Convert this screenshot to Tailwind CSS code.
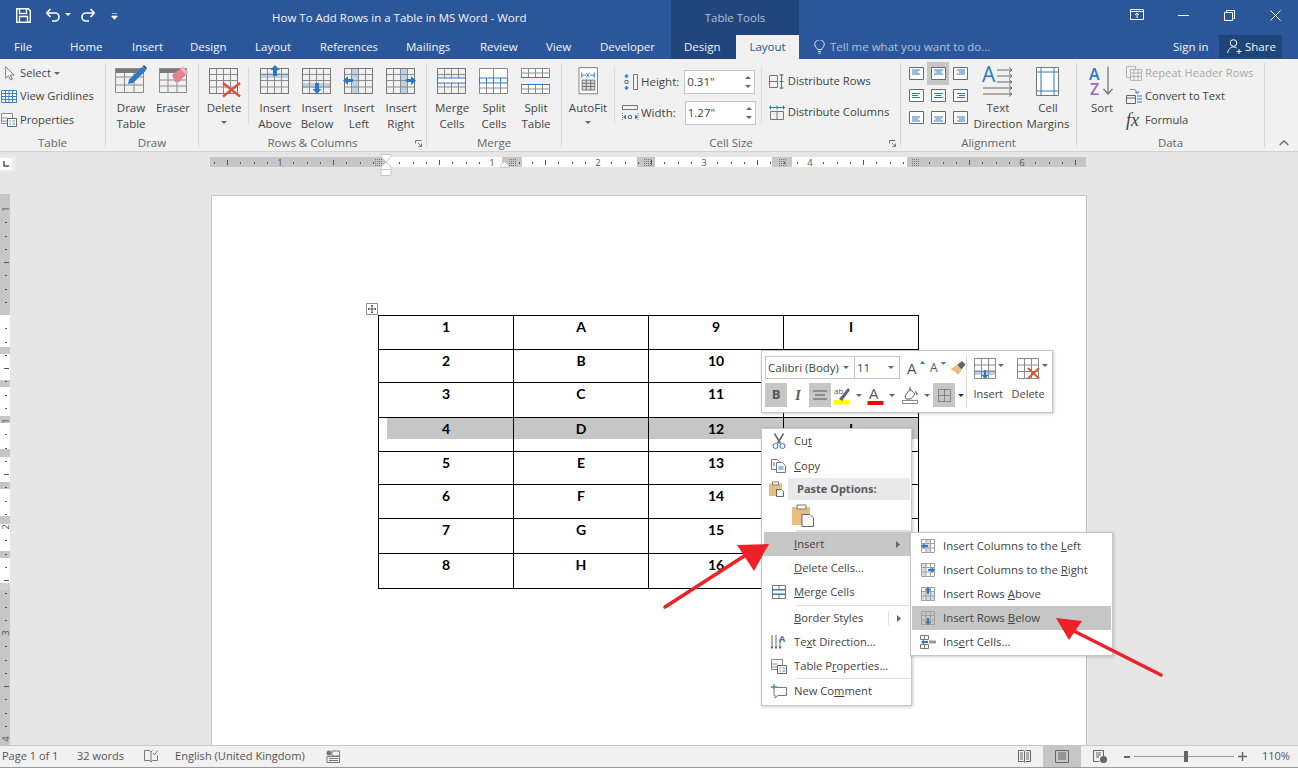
<!DOCTYPE html>
<html lang="en">
<head>
  <meta charset="UTF-8">
  <title>How To Add Rows in a Table in MS Word - Word</title>
  <script src="https://cdn.jsdelivr.net/npm/@tailwindcss/browser@4"></script>
</head>
<body class="m-0 overflow-hidden">
<svg width="0" height="0" class="absolute">
  <defs>
    <symbol id="grid" viewBox="0 0 29 26">
      <path d="M.5.5h28v25H.5zM.5 6.500h28M.5 12.500h28M.5 19h28M7.500.5v25M14.500.5v25M21.500.5v25" fill="none" stroke="#8a8a8a"/>
      <path d="M.5.5h28v25H.5z" fill="none" stroke="#777"/>
    </symbol>
    <symbol id="align" viewBox="0 0 15 13">
      <path d="M.5.5h14v12H.5z" fill="#fff" stroke="#6a6a6a"/>
    </symbol>
    <symbol id="mini" viewBox="0 0 14 14">
      <path d="M.5.5h13v13H.5zM.5 4.500h13M.5 9h13M5 .5v13M9.500.5v13" fill="none" stroke="#a0a0a0"/>
    </symbol>
    <symbol id="colmark" viewBox="0 0 7 7">
      <path d="M0 .5h7M0 2.500h7M0 4.500h7M0 6.500h7M.5 0v7M2.500 0v7M4.500 0v7M6.500 0v7" fill="none" stroke="#777" stroke-dasharray="1 1"/>
    </symbol>
  </defs>
</svg>

<div class="relative w-[1298px] h-[768px] overflow-hidden flex flex-col bg-[#e6e6e6] font-['Open_Sans',sans-serif] text-[11.5px] text-[#444]">

  <!-- title bar -->
  <div class="h-[35px] shrink-0 flex bg-[#2b579a] text-white">
    <div class="w-[272px] flex items-center pl-[16px]">
      <svg width="15" height="15" viewBox="0 0 15 15" class="mt-[-4px]"><path d="M.7.7h11.500l2.100 2.100v11.500H.7z" fill="none" stroke="#fff" stroke-width="1.400"/><path d="M3.500 1v4.500h7V1M3.500 14V8.500h8V14" fill="none" stroke="#fff" stroke-width="1.300"/></svg>
      <svg width="16" height="14" viewBox="0 0 16 14" class="ml-[14px] mt-[-6px]"><path d="M1.500 5h8.500a4 4 0 0 1 0 8H7M1.500 5l4-4M1.500 5l4 4" fill="none" stroke="#fff" stroke-width="1.600"/></svg>
      <svg width="6" height="4" viewBox="0 0 6 4" class="ml-[4px] mt-[-6px]"><path d="M0 0h6L3 3z" fill="#fff"/></svg>
      <svg width="16" height="14" viewBox="0 0 16 14" class="ml-[9px] mt-[-6px]"><path d="M14.500 5H6a4 4 0 0 0 0 8h3M14.500 5l-4-4M14.500 5l-4 4" fill="none" stroke="#fff" stroke-width="1.600"/></svg>
      <svg width="7" height="7" viewBox="0 0 7 7" class="ml-[15px] mt-[-2px]"><path d="M1 .5h5M.5 3h6L3.500 6.500z" fill="#fff" stroke="#fff" stroke-width=".6"/></svg>
    </div>
    <div class="w-[399px] pt-[9px] leading-[17px] text-[#f2f5fa]">How To Add Rows in a Table in MS Word - Word</div>
    <div class="w-[128px] bg-[#21457c] text-center pt-[9px] leading-[17px] text-[#b3c2d9]">Table Tools</div>
    <div class="flex-1 relative">
      <svg width="14" height="12" viewBox="0 0 14 12" class="absolute left-[331px] top-[9px]"><path d="M.5.5h13v10H.5zM.500 2.500h13M7 9V4.500M5 6l2-2 2 2" fill="none" stroke="#fff"/></svg>
      <svg width="11" height="2" viewBox="0 0 11 2" class="absolute left-[379px] top-[15px]"><path d="M0 .5h11" stroke="#fff"/></svg>
      <svg width="11" height="11" viewBox="0 0 11 11" class="absolute left-[425px] top-[10px]"><path d="M.5 2.500h8v8h-8zM2.500 2.500v-2h8v8h-2" fill="none" stroke="#fff"/></svg>
      <svg width="11" height="11" viewBox="0 0 11 11" class="absolute left-[471px] top-[10px]"><path d="M.5.5l10 10M10.500.5l-10 10" fill="none" stroke="#fff"/></svg>
    </div>
  </div>

  <!-- tabs -->
  <div class="h-[24px] shrink-0 flex bg-[#2b579a] text-[#f2f5fa] leading-[24px]">
    <div class="w-[70px] pl-[14px]">File</div>
    <div class="w-[62px]">Home</div>
    <div class="w-[58px]">Insert</div>
    <div class="w-[65px]">Design</div>
    <div class="w-[65px]">Layout</div>
    <div class="w-[86px] text-[11.2px]">References</div>
    <div class="w-[74px]">Mailings</div>
    <div class="w-[66px]">Review</div>
    <div class="w-[54px]">View</div>
    <div class="w-[71px]">Developer</div>
    <div class="w-[65px] bg-[#21457c] pl-[13px]">Design</div>
    <div class="w-[63px] bg-[#f1f1f1] text-[#2b579a] text-center">Layout</div>
    <div class="w-[374px] flex items-center pl-[15px] text-[#b3c2d9]">
      <svg width="11" height="14" viewBox="0 0 11 14" class="mr-[5px]"><path d="M3.500 9.500C3 7.500.7 7 .7 4.500a4.800 4.800 0 0 1 9.600 0C10.300 7 8 7.500 7.500 9.500zM4 11.500h3M4.500 13.300h2" fill="none" stroke="#dfe6f0"/></svg>
      Tell me what you want to do...
    </div>
    <div class="w-[46px]">Sign in</div>
    <div class="w-[63px] h-[23px] bg-[#1f4478] flex items-center pl-[8px] leading-[23px]">
      <svg width="15" height="15" viewBox="0 0 15 15" class="mr-[3px]"><circle cx="6.500" cy="4" r="3.300" fill="none" stroke="#fff"/><path d="M.7 14c.5-3.500 2.500-6 5.800-6 1.500 0 2.500.4 3.300 1.200M9.500 12.500h5M12 10v5" fill="none" stroke="#fff"/></svg>
      Share
    </div>
  </div>

  <!-- ribbon -->
  <div class="h-[93px] shrink-0 flex bg-[#f1f1f1] border-b border-[#d2d2d2] pt-[4px] relative">

    <!-- Table -->
    <div class="w-[106px] h-[84px] border-r border-[#d6d6d6] flex flex-col">
      <div class="h-[66px] shrink-0 text-[11.2px]">
        <div class="h-[21px] flex items-center pl-[5px]">
          <svg width="10" height="15" viewBox="0 0 10 15" class="mr-[5px]"><path d="M.7.7v11.500l2.800-2.500 2 4.300 1.800-.8-2-4.200h3.800z" fill="#fff" stroke="#7a7a7a"/></svg>
          Select
          <svg width="6" height="3" viewBox="0 0 6 3" class="ml-[3px]"><path d="M0 0h6L3 3z" fill="#666"/></svg>
        </div>
        <div class="h-[25px] flex items-center pl-[1px]">
          <svg width="16" height="13" viewBox="0 0 16 13" class="mr-[3px]"><path d="M.5.5h15v12H.5zM.5 3.500h15M.5 6.500h15M.5 9.500h15M4.500.5v12M8 .5v12M11.500.5v12" fill="#fff" stroke="#3a7fc0"/></svg>
          View Gridlines
        </div>
        <div class="h-[22px] flex items-center pl-[1px]">
          <svg width="16" height="14" viewBox="0 0 16 14" class="mr-[3px]"><path d="M.5.5h11v2H.5z" fill="#777"/><path d="M.5.5h11v10H.5zM.5 5h6M.5 8h6" fill="#fff" stroke="#8a8a8a"/><path d="M6.500 5.500h9v8h-9z" fill="#fff" stroke="#666"/><path d="M8.500 8h1.500M8.500 11h1.500M11.500 8h2.500M11.500 11h2.500" stroke="#3a7fc0"/></svg>
          Properties
        </div>
      </div>
      <div class="text-center leading-[14px] pt-[7px] text-[#666]">Table</div>
    </div>

    <!-- Draw -->
    <div class="w-[93px] h-[84px] border-r border-[#d6d6d6] flex flex-col">
      <div class="h-[66px] shrink-0 flex items-start pl-[4px]">
        <div class="w-[42px] flex flex-col items-center text-center leading-[16px]">
          <svg width="32" height="31" viewBox="0 0 32 31" class="mb-[6px]"><path d="M.5 5h28v5H.5z" fill="#7a7a7a"/><path d="M.5 5.500h28v24H.5zM.5 14h28M.5 22h28M9.500 10v19.500M19 10v19.500" fill="none" stroke="#8a8a8a"/><path d="M13 21l1-4.500L27 4l4 3.500L18 20z" fill="#2b79c2"/><path d="M27.500 3.500l1.500-1.500 3 3-1.500 2z" fill="#1f5f9e"/></svg>
          Draw<br>Table
        </div>
        <div class="w-[42px] flex flex-col items-center text-center leading-[16px]">
          <svg width="32" height="31" viewBox="0 0 32 31" class="mb-[6px]"><path d="M2.500 5h27v5h-27z" fill="#7a7a7a"/><path d="M2.500 5.500h27v24h-27zM2.500 17h27M2.500 23h27M11 10v19.500M20 17v12.500" fill="none" stroke="#8a8a8a"/><path d="M15 12L26 3.500l5 6L22 19h-4z" fill="#e8808f"/><path d="M26 3.500l5 6-2.500 2-5-6z" fill="#f3b3bc"/></svg>
          Eraser
        </div>
      </div>
      <div class="text-center leading-[14px] pt-[7px] text-[#666]">Draw</div>
    </div>

    <!-- Rows & Columns -->
    <div class="w-[228px] h-[84px] border-r border-[#d6d6d6] flex flex-col relative">
      <div class="h-[66px] shrink-0 flex items-start pl-[4px]">
        <div class="w-[42px] flex flex-col items-center text-center leading-[16px]">
          <svg width="32" height="31" viewBox="0 0 32 31" class="mb-[6px] overflow-visible"><use href="#grid" x="1" y="5" width="29" height="26"/><path d="M15 20l17 13.500M32 20L15 33.500" stroke="#d9563a" stroke-width="2.500"/></svg>
          Delete
          <svg width="6" height="3" viewBox="0 0 6 3" class="mt-[5px]"><path d="M0 0h6L3 3z" fill="#666"/></svg>
        </div>
        <div class="w-[9px] flex justify-start"><div class="w-px h-[55px] bg-[#d9d9d9] mt-[5px] ml-[3px]"></div></div>
        <div class="w-[42px] flex flex-col items-center text-center leading-[16px]">
          <svg width="32" height="31" viewBox="0 0 32 31" class="mb-[6px]"><path d="M1 10h29v5H1z" fill="#bdd0e6"/><use href="#grid" x="1" y="5" width="29" height="26"/><path d="M16 2l4.500 5H18v6h-4V7h-2.500z" fill="#2b79c2"/></svg>
          Insert<br>Above
        </div>
        <div class="w-[42px] flex flex-col items-center text-center leading-[16px]">
          <svg width="32" height="31" viewBox="0 0 32 31" class="mb-[6px]"><path d="M1 20h29v5H1z" fill="#bdd0e6"/><use href="#grid" x="1" y="5" width="29" height="26"/><path d="M16 31l-4.500-5H14v-6h4v6h2.500z" fill="#2b79c2"/></svg>
          Insert<br>Below
        </div>
        <div class="w-[42px] flex flex-col items-center text-center leading-[16px]">
          <svg width="32" height="31" viewBox="0 0 32 31" class="mb-[6px]"><path d="M9 5h6v26H9z" fill="#bdd0e6"/><use href="#grid" x="1" y="5" width="29" height="26"/><path d="M0 17.500L5 13v3h5v3H5v3z" fill="#2b79c2"/></svg>
          Insert<br>Left
        </div>
        <div class="w-[42px] flex flex-col items-center text-center leading-[16px]">
          <svg width="32" height="31" viewBox="0 0 32 31" class="mb-[6px]"><path d="M16 5h6v26h-6z" fill="#bdd0e6"/><use href="#grid" x="1" y="5" width="29" height="26"/><path d="M31 17.500L26 13v3h-5v3h5v3z" fill="#2b79c2"/></svg>
          Insert<br>Right
        </div>
      </div>
      <div class="text-center leading-[14px] pt-[7px] text-[#666]">Rows &amp; Columns</div>
      <svg width="7" height="7" viewBox="0 0 7 7" class="absolute right-[4px] bottom-[0px]"><path d="M.5 3.500v-3h6M6.500 3.500v3h-3M3 3l3 3" fill="none" stroke="#777"/></svg>
    </div>

    <!-- Merge -->
    <div class="w-[135px] h-[84px] border-r border-[#d6d6d6] flex flex-col">
      <div class="h-[66px] shrink-0 flex items-start pl-[4px]">
        <div class="w-[42px] flex flex-col items-center text-center leading-[16px]">
          <svg width="32" height="31" viewBox="0 0 32 31" class="mb-[6px]"><use href="#grid" x="1" y="5" width="29" height="26"/><path d="M1.500 15h28v5h-28z" fill="#fff" stroke="#2b79c2"/></svg>
          Merge<br>Cells
        </div>
        <div class="w-[42px] flex flex-col items-center text-center leading-[16px]">
          <svg width="32" height="31" viewBox="0 0 32 31" class="mb-[6px]"><path d="M1.500 5.500h28v25h-28zM1.500 25h28M15.500 5.500V15M8.500 20v10.500M15.500 20v10.500M22.500 20v10.500" fill="#fff" stroke="#8a8a8a"/><path d="M1.500 15h28v5h-28zM8.500 15v5M15.500 15v5M22.500 15v5" fill="#fff" stroke="#2b79c2"/></svg>
          Split<br>Cells
        </div>
        <div class="w-[42px] flex flex-col items-center text-center leading-[16px]">
          <svg width="32" height="31" viewBox="0 0 32 31" class="mb-[6px]"><path d="M1.500 5.500h28v9h-28zM1.500 21.500h28v9h-28zM1.500 10h28M1.500 26h28M8.500 5.500v9M15.500 5.500v9M22.500 5.500v9M8.500 21.500v9M15.500 21.500v9M22.500 21.500v9" fill="#fff" stroke="#8a8a8a"/><path d="M1 14.500h29M1 21.500h29" stroke="#2b79c2"/></svg>
          Split<br>Table
        </div>
      </div>
      <div class="text-center leading-[14px] pt-[7px] text-[#666]">Merge</div>
    </div>

    <!-- Cell Size -->
    <div class="w-[339px] h-[84px] border-r border-[#d6d6d6] flex flex-col relative">
      <div class="h-[66px] shrink-0 flex items-start pl-[4px]">
        <div class="w-[44px] flex flex-col items-center text-center leading-[16px]">
          <svg width="22" height="28" viewBox="0 0 24 31" class="mt-[4px] mb-[5px]"><path d="M2 .7h20.500v29H2z" fill="#fff" stroke="#777"/><path d="M5 6v6M19 6v6M5 9h5M14 9h5M10 6.500l3.500 5M13.500 6.500l-3.500 5" fill="none" stroke="#2b79c2"/><path d="M5.500 14.500h14v11h-14zM5.500 18h14M5.500 21.500h14M10 14.500v11M15 14.500v11" fill="#ddd" stroke="#666"/></svg>
          AutoFit
          <svg width="6" height="3" viewBox="0 0 6 3" class="mt-[5px]"><path d="M0 0h6L3 3z" fill="#666"/></svg>
        </div>
        <div class="w-px h-[55px] bg-[#d9d9d9] mt-[5px] ml-[4px]"></div>
        <div class="flex flex-col pl-[7px] pt-[7px]">
          <div class="h-[23px] flex items-center">
            <svg width="17" height="16" viewBox="0 0 17 16" class="mr-[2px]"><path d="M11.500.5h4v15h-4z" fill="none" stroke="#777"/><path d="M4.500 0L7 2.500H5.300V4H3.700V2.500H2zM4.500 16L2 13.500h1.700V12h1.600v1.500H7z" fill="#2b79c2"/><path d="M3 6.500h3v3H3z" fill="none" stroke="#777"/></svg>
            Height:
            <div class="ml-[5px] w-[71px] h-[24px] bg-white border border-[#c6c6c6] flex items-center pl-[2px] justify-between pr-[3px]">
              0.31"
              <div class="flex flex-col gap-[6px]"><svg width="6" height="3" viewBox="0 0 6 3"><path d="M0 3h6L3 0z" fill="#666"/></svg><svg width="6" height="3" viewBox="0 0 6 3"><path d="M0 0h6L3 3z" fill="#666"/></svg></div>
            </div>
          </div>
          <div class="h-[23px] mt-[8px] flex items-center">
            <svg width="17" height="16" viewBox="0 0 17 16" class="mr-[2px]"><path d="M.5.5h15v4H.5z" fill="none" stroke="#777"/><path d="M.5 8v7M16 8v7" stroke="#777" stroke-dasharray="1 1"/><path d="M1 12l3-2.500v5zM16 12l-3-2.500v5z" fill="#2b79c2"/><path d="M6.500 10.500h3v3h-3z" fill="none" stroke="#777"/></svg>
            Width:
            <div class="ml-[9px] w-[71px] h-[24px] bg-white border border-[#c6c6c6] flex items-center pl-[2px] justify-between pr-[3px]">
              1.27"
              <div class="flex flex-col gap-[6px]"><svg width="6" height="3" viewBox="0 0 6 3"><path d="M0 3h6L3 0z" fill="#666"/></svg><svg width="6" height="3" viewBox="0 0 6 3"><path d="M0 0h6L3 3z" fill="#666"/></svg></div>
            </div>
          </div>
        </div>
        <div class="w-px h-[55px] bg-[#d9d9d9] mt-[5px] ml-[5px]"></div>
        <div class="flex flex-col pl-[7px] pt-[7px] text-[11.3px]">
          <div class="h-[23px] flex items-center">
            <svg width="16" height="15" viewBox="0 0 16 15" class="mr-[3px]"><path d="M.5 1.500h8v12h-8zM.5 7.500h8" fill="none" stroke="#777"/><path d="M12.500 0v15M10.500 1h4M10.500 7.500h4M10.500 14h4" fill="none" stroke="#2b79c2"/></svg>
            Distribute Rows
          </div>
          <div class="h-[23px] mt-[8px] flex items-center">
            <svg width="16" height="15" viewBox="0 0 16 15" class="mr-[3px]"><path d="M1.500 6.500h13v8h-13zM8 6.500v8" fill="none" stroke="#777"/><path d="M0 2.500h16M1.500.5v4M8 .5v4M14.500.5v4" fill="none" stroke="#2b79c2"/></svg>
            Distribute Columns
          </div>
        </div>
      </div>
      <div class="text-center leading-[14px] pt-[7px] text-[#666]">Cell Size</div>
      <svg width="7" height="7" viewBox="0 0 7 7" class="absolute right-[4px] bottom-[0px]"><path d="M.5 3.500v-3h6M6.500 3.500v3h-3M3 3l3 3" fill="none" stroke="#777"/></svg>
    </div>

    <!-- Alignment -->
    <div class="w-[176px] h-[84px] border-r border-[#d6d6d6] flex flex-col">
      <div class="h-[66px] shrink-0 flex items-start pl-[4px]">
        <div class="w-[66px] grid grid-cols-3 grid-rows-3 h-[66px] mt-[-1px]">
          <div class="flex items-center justify-center w-[22px] h-[23px]"><svg width="15" height="13" viewBox="0 0 15 13"><use href="#align"/><path d="M3 3h8M3 5h6M3 7h8" stroke="#2b79c2"/></svg></div>
          <div class="flex items-center justify-center w-[22px] h-[23px] bg-[#c6c6c6]"><svg width="15" height="13" viewBox="0 0 15 13"><use href="#align"/><path d="M3 3h9M4.500 5h6M3 7h9" stroke="#2b79c2"/></svg></div>
          <div class="flex items-center justify-center w-[22px] h-[23px]"><svg width="15" height="13" viewBox="0 0 15 13"><use href="#align"/><path d="M4 3h8M6 5h6M4 7h8" stroke="#2b79c2"/></svg></div>
          <div class="flex items-center justify-center w-[22px] h-[23px]"><svg width="15" height="13" viewBox="0 0 15 13"><use href="#align"/><path d="M3 4.500h8M3 6.500h6M3 8.500h8" stroke="#2b79c2"/></svg></div>
          <div class="flex items-center justify-center w-[22px] h-[23px]"><svg width="15" height="13" viewBox="0 0 15 13"><use href="#align"/><path d="M3 4.500h9M4.500 6.500h6M3 8.500h9" stroke="#2b79c2"/></svg></div>
          <div class="flex items-center justify-center w-[22px] h-[23px]"><svg width="15" height="13" viewBox="0 0 15 13"><use href="#align"/><path d="M4 4.500h8M6 6.500h6M4 8.500h8" stroke="#2b79c2"/></svg></div>
          <div class="flex items-center justify-center w-[22px] h-[23px]"><svg width="15" height="13" viewBox="0 0 15 13"><use href="#align"/><path d="M3 6h8M3 8h6M3 10h8" stroke="#2b79c2"/></svg></div>
          <div class="flex items-center justify-center w-[22px] h-[23px]"><svg width="15" height="13" viewBox="0 0 15 13"><use href="#align"/><path d="M3 6h9M4.500 8h6M3 10h9" stroke="#2b79c2"/></svg></div>
          <div class="flex items-center justify-center w-[22px] h-[23px]"><svg width="15" height="13" viewBox="0 0 15 13"><use href="#align"/><path d="M4 6h8M6 8h6M4 10h8" stroke="#2b79c2"/></svg></div>
        </div>
        <div class="w-[50px] flex flex-col items-center text-center leading-[16px] ml-[2px]">
          <svg width="32" height="31" viewBox="0 0 32 31" class="mt-[3px] mb-[3px] overflow-visible"><text x="0" y="16" font-family="Open Sans" font-size="21" fill="#2b79c2">A</text><path d="M15 4h15M15 10h15M15 16h15M1 22h29M1 28h29M27 1.500l3 2.500-3 2.500M27 7.500l3 2.500-3 2.500M27 13.500l3 2.500-3 2.500M27 19.500l3 2.500-3 2.500M27 25.500l3 2.500-3 2.500" fill="none" stroke="#666"/></svg>
          Text<br>Direction
        </div>
        <div class="w-[50px] flex flex-col items-center text-center leading-[16px]">
          <svg width="24" height="31" viewBox="0 0 24 31" class="mt-[3px] mb-[3px]"><path d="M.5 1.500h22v28H.5z" fill="#fff" stroke="#777"/><path d="M5 1.500v28M18 1.500v28M.5 6h22M.5 25h22" fill="none" stroke="#2b79c2"/></svg>
          Cell<br>Margins
        </div>
      </div>
      <div class="text-center leading-[14px] pt-[7px] text-[#666]">Alignment</div>
    </div>

    <!-- Data -->
    <div class="w-[188px] h-[84px] border-r border-[#d6d6d6] flex flex-col">
      <div class="h-[66px] shrink-0 flex items-start pl-[5px]">
        <div class="w-[40px] flex flex-col items-center text-center leading-[16px]">
          <svg width="26" height="31" viewBox="0 0 26 31" class="mt-[3px] mb-[3px] overflow-visible"><text x="0" y="14" font-family="Open Sans" font-size="16" font-weight="600" fill="#2b79c2">A</text><text x="1" y="29" font-family="Open Sans" font-size="16" font-weight="600" fill="#9a6bbd">Z</text><path d="M19 .5V28M14.500 23l4.500 5 4.500-5" fill="none" stroke="#777" stroke-width="1.300"/></svg>
          Sort
        </div>
        <div class="flex flex-col pl-[4px] text-[11.2px]">
          <div class="h-[21px] flex items-center text-[#a9a9a9]">
            <svg width="16" height="15" viewBox="0 0 16 15" class="mr-[3px]"><path d="M.5.5h9v11h-9z" fill="none" stroke="#b5b5b5"/><path d="M4.500 3.500h11v11h-11zM4.500 7h11M4.500 10.500h11M8 3.500v11M12 3.500v11" fill="#f1f1f1" stroke="#b5b5b5"/></svg>
            Repeat Header Rows
          </div>
          <div class="h-[25px] flex items-center">
            <svg width="16" height="15" viewBox="0 0 16 15" class="mr-[3px]"><path d="M.5 6.500h9v8h-9zM.5 9h9" fill="none" stroke="#666"/><path d="M4 .5c4-1 6 .5 7 3M9 3l2.500 1.500L13 2" fill="none" stroke="#2b79c2"/><path d="M11 7h5M11 10h5M11 13h5" stroke="#2b79c2"/></svg>
            Convert to Text
          </div>
          <div class="h-[22px] flex items-center">
            <span class="w-[19px] text-[18px] font-['Liberation_Serif',serif] italic leading-none text-[#444]">fx</span>
            Formula
          </div>
        </div>
      </div>
      <div class="text-center leading-[14px] pt-[7px] text-[#666]">Data</div>
    </div>
    <svg width="10" height="6" viewBox="0 0 10 6" class="absolute left-[1279px] top-[81px]"><path d="M.7 5L5 1l4.300 4" fill="none" stroke="#666" stroke-width="1.300"/></svg>
  </div>

  <!-- document area -->
  <div class="flex-1 relative min-h-0 flex flex-col items-start">
    <div class="absolute left-0 top-[3px] w-[16px] h-[17px] bg-[#ebebeb] pl-0">
      <div class="w-[12px] h-[12px] bg-white mt-[3px] flex items-center justify-center"><svg width="6" height="6" viewBox="0 0 6 6"><path d="M1 0v5h5" fill="none" stroke="#555" stroke-width="1.500"/></svg></div>
    </div>

    <!-- horizontal ruler -->
    <div class="ml-[210px] mt-[5px] w-[876px] h-[10px] flex shrink-0 relative">
      <div class="w-[176px] bg-[#c6c6c6]"></div>
      <div class="w-[116px] bg-white"></div>
      <div class="w-[20px] bg-[#c6c6c6]"></div>
      <div class="w-[115px] bg-white"></div>
      <div class="w-[18px] bg-[#c6c6c6]"></div>
      <div class="w-[117px] bg-white"></div>
      <div class="w-[20px] bg-[#c6c6c6]"></div>
      <div class="w-[115px] bg-white"></div>
      <div class="flex-1 bg-[#c6c6c6]"></div>
      <svg id="hruler" width="876" height="10" viewBox="0 0 876 10" class="absolute left-0 top-0 overflow-visible"></svg>
      <svg width="7" height="7" class="absolute left-[165px] top-[2px]"><use href="#colmark"/></svg>
      <svg width="7" height="7" class="absolute left-[299px] top-[2px]"><use href="#colmark"/></svg>
      <svg width="7" height="7" class="absolute left-[434px] top-[2px]"><use href="#colmark"/></svg>
      <svg width="7" height="7" class="absolute left-[569px] top-[2px]"><use href="#colmark"/></svg>
      <svg width="7" height="7" class="absolute left-[702px] top-[2px]"><use href="#colmark"/></svg>
      <svg width="14" height="24" viewBox="0 0 14 24" class="absolute left-[170px] top-[-3px]"><path d="M1 .5h10v2L6 8 1 2.500zM6 8l5 4.500v3H1v-3zM1 15.500h10v6H1z" fill="#fff" stroke="#c6c6c6"/></svg>
      <svg width="10" height="7" viewBox="0 0 10 7" class="absolute left-[290px] top-[4px]"><path d="M.5 6.500v-2L4.500.5l4 4v2z" fill="#fff" stroke="#c6c6c6"/></svg>
    </div>

    <!-- vertical ruler -->
    <div class="absolute left-0 top-[42px] w-[10px] h-[551px] bg-white">
      <div class="absolute left-0 top-0 w-full h-[121px] bg-[#c6c6c6]"></div>
      <div class="absolute left-0 top-[153px] w-full h-[7px] bg-[#c6c6c6]"></div>
      <div class="absolute left-0 top-[186px] w-full h-[7px] bg-[#c6c6c6]"></div>
      <div class="absolute left-0 top-[222px] w-full h-[7px] bg-[#c6c6c6]"></div>
      <div class="absolute left-0 top-[255px] w-full h-[8px] bg-[#c6c6c6]"></div>
      <div class="absolute left-0 top-[288px] w-full h-[7px] bg-[#c6c6c6]"></div>
      <div class="absolute left-0 top-[322px] w-full h-[8px] bg-[#c6c6c6]"></div>
      <div class="absolute left-0 top-[357px] w-full h-[7px] bg-[#c6c6c6]"></div>
      <div class="absolute left-0 top-[389px] w-full h-[7px] bg-[#d0d0d0]"></div>
      <div class="absolute left-0 top-[396px] w-full h-[155px] bg-[#c6c6c6]"></div>
      <svg id="vruler" width="10" height="551" viewBox="0 0 10 551" class="absolute left-0 top-0 overflow-visible"></svg>
    </div>

    <!-- page -->
    <div class="ml-[211px] mt-[28px] w-[876px] flex-1 bg-white border-x border-t border-[#c6c6c6] pt-[119px] pl-[166px] font-['Lato',sans-serif] text-[14px] font-bold text-black relative">
      <table class="table-fixed border-collapse w-[541px] text-center">
        <colgroup><col class="w-[135px]"><col class="w-[135px]"><col class="w-[135px]"><col class="w-[135px]"></colgroup>
        <tbody>
          <tr class="h-[34px]"><td class="border border-black align-top leading-[22px]">1</td><td class="border border-black align-top leading-[22px]">A</td><td class="border border-black align-top leading-[22px]">9</td><td class="border border-black align-top leading-[22px]">I</td></tr>
          <tr class="h-[33px]"><td class="border border-black align-top leading-[22px]">2</td><td class="border border-black align-top leading-[22px]">B</td><td class="border border-black align-top leading-[22px]">10</td><td class="border border-black align-top leading-[22px]"></td></tr>
          <tr class="h-[35px]"><td class="border border-black align-top leading-[22px]">3</td><td class="border border-black align-top leading-[22px]">C</td><td class="border border-black align-top leading-[22px]">11</td><td class="border border-black align-top leading-[22px]"></td></tr>
          <tr class="h-[34px]"><td class="border border-black align-top leading-[22px]"><div class="ml-[8px] pr-[8px] bg-[#c6c6c6] h-[21px]">4</div></td><td class="border border-black align-top leading-[22px]"><div class="bg-[#c6c6c6] h-[21px]">D</div></td><td class="border border-black align-top leading-[22px]"><div class="bg-[#c6c6c6] h-[21px]">12</div></td><td class="border border-black align-top leading-[22px]"><div class="bg-[#c6c6c6] h-[21px]">I</div></td></tr>
          <tr class="h-[33px]"><td class="border border-black align-top leading-[22px]">5</td><td class="border border-black align-top leading-[22px]">E</td><td class="border border-black align-top leading-[22px]">13</td><td class="border border-black align-top leading-[22px]"></td></tr>
          <tr class="h-[34px]"><td class="border border-black align-top leading-[22px]">6</td><td class="border border-black align-top leading-[22px]">F</td><td class="border border-black align-top leading-[22px]">14</td><td class="border border-black align-top leading-[22px]"></td></tr>
          <tr class="h-[35px]"><td class="border border-black align-top leading-[22px]">7</td><td class="border border-black align-top leading-[22px]">G</td><td class="border border-black align-top leading-[22px]">15</td><td class="border border-black align-top leading-[22px]"></td></tr>
          <tr class="h-[35px]"><td class="border border-black align-top leading-[22px]">8</td><td class="border border-black align-top leading-[22px]">H</td><td class="border border-black align-top leading-[22px]">16</td><td class="border border-black align-top leading-[22px]"></td></tr>
        </tbody>
      </table>
      <!-- table move handle -->
      <svg width="12" height="12" viewBox="0 0 12 12" class="absolute left-[154px] top-[107px]"><path d="M.5.5h11v11H.5z" fill="#fff" stroke="#909090"/><path d="M6 2v8M2 6h8M5 3l1-1 1 1M5 9l1 1 1-1M3 5L2 6l1 1M9 5l1 1-1 1" fill="none" stroke="#555"/></svg>
    </div>
  </div>

  <!-- status bar -->
  <div class="h-[23px] shrink-0 flex items-center bg-[#f1f1f1] border-t border-[#c6c6c6] border-b border-b-[#9a9a9a] text-[#555] text-[11px] relative">
    <span class="ml-[2px] w-[75px]">Page 1 of 1</span>
    <span class="w-[67px]">32 words</span>
    <svg width="14" height="13" viewBox="0 0 14 13"><path d="M.5.5h5l1.500 1.500L8.500.5M.5.5v10h5l1.500 1.500V2M7 12l1.500-1.500H13.500v-5M9 3l1.500 2 3-4.500" fill="none" stroke="#777"/></svg>
    <span class="ml-[17px] w-[151px] text-[11.1px]">English (United Kingdom)</span>
    <svg width="14" height="13" viewBox="0 0 14 13"><circle cx="3" cy="3" r="2.500" fill="#777"/><path d="M1 6.500h12.500v6H1zM3 8.500h9M3 10.500h9" fill="none" stroke="#777"/><path d="M6 1h7.500v5H6z" fill="none" stroke="#777"/></svg>
    <div class="flex-1"></div>
    <svg width="13" height="13" viewBox="0 0 13 13"><path d="M.5.5h5l1 1 1-1h5v11h-5l-1 1-1-1h-5zM6.500 1.500v10M2 3h3M2 5h3M2 7h3M2 9h3M8 3h3M8 5h3M8 7h3M8 9h3" fill="none" stroke="#666"/></svg>
    <div class="ml-[12px] w-[38px] h-[21px] bg-[#c6c6c6] flex items-center justify-center"><svg width="14" height="13" viewBox="0 0 14 13"><path d="M.5.500h13v12H.5zM3 3h8M3 5h8M3 7h8M3 9h8" fill="none" stroke="#666"/></svg></div>
    <svg width="14" height="13" viewBox="0 0 14 13" class="ml-[12px]"><path d="M.5.500h10v8M.5.500v11h6M3 3h5M3 5h5M3 7h3" fill="none" stroke="#666"/><circle cx="10.500" cy="9.500" r="3.500" fill="#666"/></svg>
    <div class="ml-[17px] w-[6px] h-[2px] bg-[#666]"></div>
    <div class="ml-[4px] w-[100px] h-px bg-[#999] relative"><div class="absolute left-[50px] top-[-5px] w-[4px] h-[11px] bg-[#666]"></div></div>
    <svg width="9" height="9" viewBox="0 0 9 9" class="ml-[4px]"><path d="M0 4.500h9M4.500 0v9" stroke="#666" stroke-width="1.500"/></svg>
    <span class="ml-[15px] w-[36px]">110%</span>
  </div>

  <!-- mini toolbar -->
  <div class="absolute left-[761px] top-[350px] w-[292px] h-[63px] bg-white border border-[#c6c6c6] shadow-[1px_1px_3px_rgba(0,0,0,0.2)] flex pl-[3px] pt-[5px]">
    <div class="w-[203px]">
      <div class="flex items-center h-[23px]">
        <div class="w-[90px] h-[23px] border border-[#c6c6c6] flex items-center justify-between pl-[2px] pr-[5px]">Calibri (Body)<svg width="6" height="3" viewBox="0 0 6 3"><path d="M0 0h6L3 3z" fill="#666"/></svg></div>
        <div class="w-[45px] h-[23px] border border-[#c6c6c6] border-l-0 flex items-center justify-between pl-[2px] pr-[5px]">11<svg width="6" height="3" viewBox="0 0 6 3"><path d="M0 0h6L3 3z" fill="#666"/></svg></div>
        <div class="ml-[7px] w-[14px] h-[20px] relative text-[15px] leading-[20px] text-[#555]">A<svg width="5" height="3" viewBox="0 0 5 3" class="absolute right-[-4px] top-[3px]"><path d="M0 3h5L2.500 0z" fill="#2b79c2"/></svg></div>
        <div class="ml-[9px] w-[12px] h-[20px] relative text-[12px] leading-[20px] text-[#555]">A<svg width="5" height="3" viewBox="0 0 5 3" class="absolute right-[-4px] top-[4px]"><path d="M0 0h5L2.500 3z" fill="#2b79c2"/></svg></div>
        <svg width="17" height="15" viewBox="0 0 17 15" class="ml-[8px]"><path d="M.5 9l6-4 5 5-3.500 5c-2-2.500-4-4-7.500-6z" fill="#e8be7e"/><path d="M7 5l5-4 3.500 3.500-4 5z" fill="#666"/></svg>
      </div>
      <div class="flex items-center h-[24px] mt-[4px]">
        <div class="w-[22px] h-[24px] bg-[#c6c6c6] flex items-center justify-center font-bold text-[13px] text-[#555]">B</div>
        <div class="w-[22px] h-[24px] flex items-center justify-center italic font-bold font-['Liberation_Serif',serif] text-[14px] text-[#555]">I</div>
        <div class="w-[22px] h-[24px] bg-[#c6c6c6] flex items-center justify-center"><svg width="14" height="11" viewBox="0 0 14 11"><path d="M0 1h14M2 5h10M0 9h14" stroke="#555"/></svg></div>
        <svg width="17" height="19" viewBox="0 0 17 19" class="ml-[3px] overflow-visible"><path d="M0 14h16v4.500H0z" fill="#ffff00"/><path d="M5 13l9-11 2 2-8 11z" fill="#666"/><text x="0" y="8" font-family="Open Sans" font-size="8" fill="#555">ab</text></svg>
        <svg width="6" height="3" viewBox="0 0 6 3" class="ml-[5px]"><path d="M0 0h6L3 3z" fill="#666"/></svg>
        <svg width="17" height="19" viewBox="0 0 17 19" class="ml-[5px] overflow-visible"><text x="2" y="13" font-family="Open Sans" font-size="15" fill="#555">A</text><path d="M.5 15h16v4H.5z" fill="#ff0000"/></svg>
        <svg width="6" height="3" viewBox="0 0 6 3" class="ml-[5px]"><path d="M0 0h6L3 3z" fill="#666"/></svg>
        <svg width="17" height="18" viewBox="0 0 17 18" class="ml-[7px]"><path d="M3 10l5-7 5 5-4 5H4z" fill="#fff" stroke="#666"/><path d="M8 .5v5" stroke="#666"/><path d="M13 4l3 4-2 1z" fill="#2b79c2"/><path d="M.5 14.500h15v3H.5z" fill="#fff" stroke="#888"/></svg>
        <svg width="6" height="3" viewBox="0 0 6 3" class="ml-[5px]"><path d="M0 0h6L3 3z" fill="#666"/></svg>
        <div class="ml-[3px] w-[22px] h-[24px] bg-[#c6c6c6] flex items-center justify-center"><svg width="13" height="13" viewBox="0 0 13 13"><path d="M.5.500h12v12H.5zM6.500.5v12M.5 6.500h12" fill="none" stroke="#444" stroke-dasharray="1 1"/></svg></div>
        <svg width="6" height="3" viewBox="0 0 6 3" class="ml-[3px]"><path d="M0 0h6L3 3z" fill="#333"/></svg>
      </div>
    </div>
    <div class="w-px h-[52px] bg-[#d9d9d9] ml-[-1px]"></div>
    <div class="flex flex-col items-center w-[42px] ml-[1px] pt-[2px]">
      <div class="flex items-start">
        <svg width="22" height="21" viewBox="0 0 22 21"><path d="M1 12h20v5H1z" fill="#bdd0e6"/><path d="M.5.500h21v20H.5zM.5 7h21M.5 13.500h21M7.500.5v20M14.500.5v20" fill="none" stroke="#8a8a8a"/><path d="M11 21l-3.500-4H10v-5h2v5h2.500z" fill="#2b79c2"/></svg>
        <svg width="6" height="3" viewBox="0 0 6 3" class="ml-[2px] mt-[6px]"><path d="M0 0h6L3 3z" fill="#666"/></svg>
      </div>
      <span class="mt-[8px] leading-[14px] text-[11px] -translate-x-px">Insert</span>
    </div>
    <div class="flex flex-col items-center w-[40px] ml-[2px] pt-[2px]">
      <div class="flex items-start">
        <svg width="24" height="21" viewBox="0 0 24 21"><path d="M.5.500h21v20H.5zM.5 7h21M.5 13.500h21M7.500.5v20M14.500.5v20" fill="none" stroke="#8a8a8a"/><path d="M11 10l11 10.500M22 10L11 20.500" stroke="#d9563a" stroke-width="2"/></svg>
        <svg width="6" height="3" viewBox="0 0 6 3" class="ml-[1px] mt-[6px]"><path d="M0 0h6L3 3z" fill="#666"/></svg>
      </div>
      <span class="mt-[8px] leading-[14px] text-[11px] -translate-x-[4px]">Delete</span>
    </div>
  </div>

  <!-- context menu -->
  <div class="absolute left-[761px] top-[428px] w-[151px] h-[278px] bg-white border border-[#c6c6c6] shadow-[1px_1px_3px_rgba(0,0,0,0.2)] pl-px text-[11.2px]">
    <div class="h-[24px] flex items-center">
      <div class="w-[31px] flex justify-center"><svg width="14" height="16" viewBox="0 0 14 16"><path d="M2.500.5l6 10M11.500.5l-6 10" stroke="#666" stroke-width="1.500"/><circle cx="3.500" cy="13" r="2.500" fill="none" stroke="#2b79c2"/><circle cx="10.500" cy="13" r="2.500" fill="none" stroke="#2b79c2"/></svg></div>
      <span>Cu<u>t</u></span>
    </div>
    <div class="h-[24px] mt-px flex items-center">
      <div class="w-[31px] flex justify-center"><svg width="15" height="14" viewBox="0 0 15 14"><path d="M.5.500h6l2 2v8h-8z" fill="#fff" stroke="#777"/><path d="M5.500 3.500h6l3 3v7h-9z" fill="#fff" stroke="#777"/><path d="M7.500 8h5M7.500 10h5M2 4h2M2 6h2" stroke="#2b79c2"/></svg></div>
      <span><u>C</u>opy</span>
    </div>
    <div class="h-[22px] flex items-center">
      <div class="w-[24px] flex justify-center ml-[1px]"><svg width="15" height="16" viewBox="0 0 15 16"><path d="M0 2.500h13V15H0z" fill="#e8be7e"/><path d="M3.500 1h6v3h-6z" fill="#fff" stroke="#777"/><path d="M7.500 8.500h5l2 2v5h-7z" fill="#fff" stroke="#666"/></svg></div>
      <div class="flex-1 h-[22px] mr-px bg-[#e9e9e9] flex items-center pl-[9px] font-bold text-[#5a5a5a] text-[11px]">Paste Options:</div>
    </div>
    <div class="h-[30px] flex items-center pl-[29px]">
      <svg width="22" height="23" viewBox="0 0 22 23"><path d="M0 3h18v18H0z" fill="#e8be7e"/><path d="M5 1h9v4H5z" fill="#fff" stroke="#777"/><path d="M10 10.500h8l3.500 3.500v8.500H10z" fill="#fff" stroke="#666"/></svg>
    </div>
    <div class="h-[2px] ml-[33px] bg-[#e0e0e0]"></div>
    <div class="h-[24px] flex items-center bg-[#c6c6c6] mx-px">
      <span class="ml-[30px]"><u>I</u>nsert</span>
      <svg width="4" height="7" viewBox="0 0 4 7" class="ml-auto mr-[10px]"><path d="M0 0l4 3.500L0 7z" fill="#666"/></svg>
    </div>
    <div class="h-[24px] flex items-center pl-[31px]"><span><u>D</u>elete Cells...</span></div>
    <div class="h-[24px] flex items-center">
      <div class="w-[31px] flex justify-center"><svg width="14" height="14" viewBox="0 0 14 14"><path d="M.5.500h13v13H.5zM7 .500v4M.500 4.500h13M.500 9.500h13M7 9.500v4" fill="none" stroke="#777"/><path d="M.5 5h13v4H.5z" fill="#fff" stroke="#2b79c2"/></svg></div>
      <span><u>M</u>erge Cells</span>
    </div>
    <div class="h-px mt-px ml-[33px] bg-[#e0e0e0]"></div>
    <div class="h-[24px] flex items-center pl-[31px]">
      <span><u>B</u>order Styles</span>
      <div class="ml-auto w-px h-[14px] bg-[#e0e0e0] mr-[8px]"></div>
      <svg width="4" height="7" viewBox="0 0 4 7" class="mr-[10px]"><path d="M0 0l4 3.500L0 7z" fill="#666"/></svg>
    </div>
    <div class="h-[24px] flex items-center">
      <div class="w-[31px] flex justify-center"><svg width="16" height="16" viewBox="0 0 16 16" class="overflow-visible"><path d="M1 1v13M5 1v13M9 5v9M0 12.500l1 2 1-2M4 12.500l1 2 1-2M8 12.500l1 2 1-2" fill="none" stroke="#666"/><text x="8" y="8" font-family="Open Sans" font-size="9" font-weight="700" fill="#2b79c2">A</text></svg></div>
      <span>Te<u>x</u>t Direction...</span>
    </div>
    <div class="h-[24px] flex items-center">
      <div class="w-[31px] flex justify-center"><svg width="16" height="15" viewBox="0 0 16 15"><path d="M.5.5h11v2H.5z" fill="#777"/><path d="M.5.5h11v10H.5zM.5 5h6M.5 8h6" fill="#fff" stroke="#8a8a8a"/><path d="M6.500 6.500h9v8h-9z" fill="#fff" stroke="#666"/><path d="M8.500 9h1.500M8.500 12h1.500M11.500 9h2.500M11.500 12h2.500" stroke="#3a7fc0"/></svg></div>
      <span>Table P<u>r</u>operties...</span>
    </div>
    <div class="h-px ml-[33px] bg-[#e0e0e0]"></div>
    <div class="h-[24px] flex items-center">
      <div class="w-[31px] flex justify-center"><svg width="16" height="15" viewBox="0 0 16 15"><path d="M5.500 3.500h10v8H7L4 14v-2.500H3V6" fill="none" stroke="#777"/><path d="M3 0v6M0 3h6" stroke="#3f8f7f" stroke-width="1.300"/></svg></div>
      <span>New Co<u>m</u>ment</span>
    </div>
  </div>

  <!-- insert submenu -->
  <div class="absolute left-[910px] top-[532px] w-[203px] h-[124px] bg-white border border-[#c6c6c6] shadow-[1px_1px_3px_rgba(0,0,0,0.2)] pt-px px-px text-[11.4px]">
    <div class="h-[24px] flex items-center">
      <div class="w-[31px] flex justify-center"><svg width="14" height="14" viewBox="0 0 14 14"><path d="M5 0h4v14H5z" fill="#d5dde6"/><use href="#mini"/><path d="M0 7l3.500-3v2H7v2H3.500v2z" fill="#2b79c2"/></svg></div>
      <span>Insert Columns to the <u>L</u>eft</span>
    </div>
    <div class="h-[24px] flex items-center">
      <div class="w-[31px] flex justify-center"><svg width="14" height="14" viewBox="0 0 14 14"><path d="M1 1h4v12H1z" fill="#d5dde6"/><use href="#mini"/><path d="M14 7l-3.500-3v2H7v2h3.500v2z" fill="#2b79c2"/></svg></div>
      <span>Insert Columns to the <u>R</u>ight</span>
    </div>
    <div class="h-[24px] flex items-center">
      <div class="w-[31px] flex justify-center"><svg width="14" height="14" viewBox="0 0 14 14"><path d="M1 5h12v8H1z" fill="#d5dde6"/><use href="#mini"/><path d="M7 0l3 3.500H8V7H6V3.500H4z" fill="#2b79c2"/></svg></div>
      <span>Insert Rows <u>A</u>bove</span>
    </div>
    <div class="h-[24px] flex items-center bg-[#c6c6c6]">
      <div class="w-[31px] flex justify-center"><svg width="14" height="14" viewBox="0 0 14 14"><use href="#mini"/><path d="M7 14l3-3.500H8V7H6v3.500H4z" fill="#2b79c2"/></svg></div>
      <span>Insert Rows <u>B</u>elow</span>
    </div>
    <div class="h-[24px] flex items-center">
      <div class="w-[31px] flex justify-center"><svg width="16" height="14" viewBox="0 0 16 14"><path d="M.5.500h8v4h-8zM.500 9.500h8v4h-8zM4.500.5v4M4.500 9.500v4" fill="none" stroke="#777"/><path d="M9 5.500h7v3H9z" fill="#999"/><path d="M1 7l3-2.500V6h4v2H4v1.500z" fill="#2b79c2"/></svg></div>
      <span>Ins<u>e</u>rt Cells...</span>
    </div>
  </div>

  <!-- red callout arrows -->
  <svg width="1298" height="768" viewBox="0 0 1298 768" class="absolute left-0 top-0 pointer-events-none">
    <path d="M665 607L752 551" stroke="#ee2028" stroke-width="3.500" stroke-linecap="round"/>
    <path d="M769 544L737 545 754 571z" fill="#ee2028"/>
    <path d="M1161 675L1068 628" stroke="#ee2028" stroke-width="3.500" stroke-linecap="round"/>
    <path d="M1056 618L1082 621 1069 640z" fill="#ee2028"/>
  </svg>
</div>

<script>
  // ruler ticks
  const hr = document.getElementById("hruler")
  let hs = ""
  for (let k = -13; k <= 52; k++) {
    const x = 176 + k * 13.25
    if (k === 0) continue
    if (k % 8 === 0) {
      const n = Math.abs(k / 8)
      if (n === 5) continue
      hs += `<text x="${x}" y="9" text-anchor="middle" font-family="Open Sans" font-size="9.500" fill="#555">${n}</text>`
    } else if (k % 4 === 0) {
      hs += `<rect x="${Math.round(x)}" y="3" width="1" height="5" fill="#555"/>`
    } else {
      hs += `<rect x="${Math.round(x)}" y="5" width="1" height="2" fill="#555"/>`
    }
  }
  hr.innerHTML = hs

  const vr = document.getElementById("vruler")
  let vs = ""
  for (let k = -8; k <= 34; k++) {
    const y = 121 + k * 13.25
    if (k === 0) continue
    if (k % 8 === 0) {
      const n = Math.abs(k / 8)
      vs += `<text x="0" y="0" transform="translate(1 ${y}) rotate(-90)" text-anchor="middle" font-family="Open Sans" font-size="9.500" fill="#555" dominant-baseline="hanging">${n}</text>`
    } else if (k % 4 === 0) {
      vs += `<rect x="4" y="${Math.round(y)}" width="5" height="1" fill="#555"/>`
    } else {
      vs += `<rect x="5" y="${Math.round(y)}" width="2" height="1" fill="#555"/>`
    }
  }
  vr.innerHTML = vs
</script>
</body>
</html>
